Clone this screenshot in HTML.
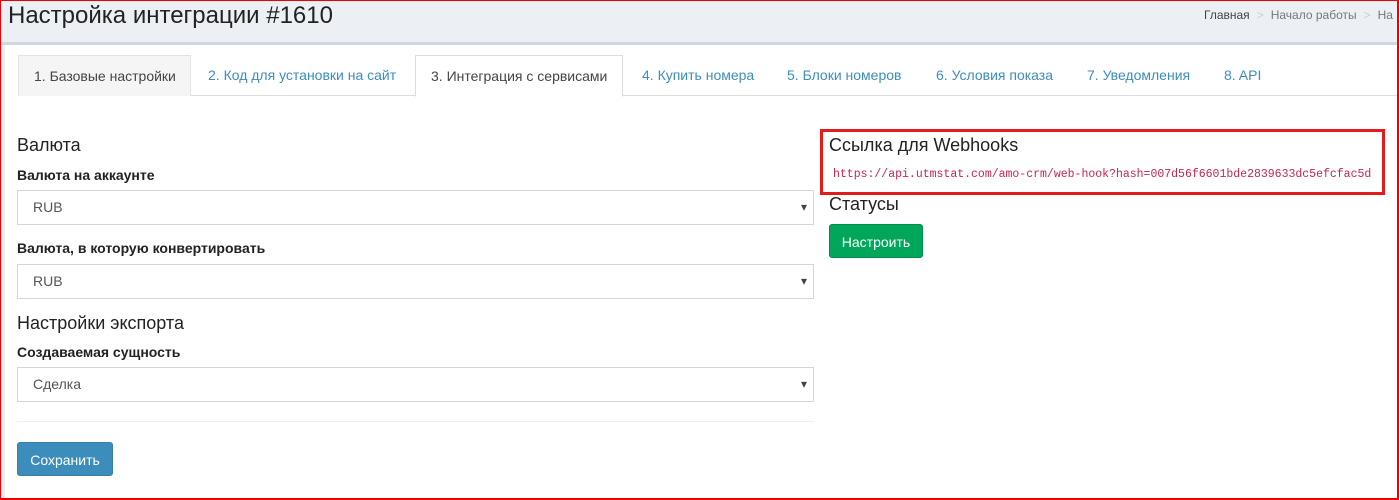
<!DOCTYPE html>
<html><head><meta charset="utf-8"><style>
*{box-sizing:border-box;margin:0;padding:0}
body{width:1399px;height:500px;overflow:hidden;background:#ecf0f5;font-family:"Liberation Sans",sans-serif;font-size:14px;color:#333;position:relative}
.frame{position:absolute;left:0;top:0;width:1399px;height:500px;border:1px solid #e00;border-right:2px solid #e00;border-bottom:2px solid #e00;pointer-events:none;z-index:10}
h1{position:absolute;left:8px;top:2px;font-size:24px;font-weight:normal;color:#222}
.bc{position:absolute;left:1204px;top:8px;font-size:12px;color:#777;white-space:nowrap}
.bc b{font-weight:normal;color:#444}.bc i{font-style:normal;color:#ccc;margin:0 7px}
.band{position:absolute;left:0;top:42px;width:1399px;height:3px;background:#d2d6de}
.box{position:absolute;left:5px;top:45px;width:1394px;height:455px;background:#fff}
.tabs{position:absolute;left:18px;top:55px;right:0;height:41px;border-bottom:1px solid #ddd}
.tab{position:absolute;top:0;height:41px;line-height:40px;color:#3c8dbc;padding:0 15px;white-space:nowrap}
.t1{background:#f5f5f5;border:1px solid #e3e3e3;border-bottom:none;color:#444;left:0;width:173px}
.t3{background:#fff;border:1px solid #ddd;border-bottom:1px solid #fff;color:#444;left:397px;width:208px;height:42px}
.h{position:absolute;font-size:18px;color:#222}
.lbl{position:absolute;font-weight:bold;font-size:14px;color:#222}
.sel{position:absolute;left:17px;width:797px;height:35px;border:1px solid #d2d6de;padding:0 0 0 15px;line-height:33px;color:#555}
.sel:after{content:"▾";position:absolute;right:6px;top:0;font-size:12px;color:#444}
.hr{position:absolute;left:17px;top:421px;width:797px;height:1px;background:#eee}
.btn{position:absolute;color:#fff;border-radius:3px;text-align:center;line-height:34px;font-size:14px}
.wh{position:absolute;left:820px;top:129px;width:565px;height:66px;border:3px solid #e41b1b}
code{position:absolute;left:10px;top:36px;font-family:"Liberation Mono",monospace;font-size:11.5px;color:#c7254e}
</style></head><body>
<h1>Настройка интеграции #1610</h1>
<div class="bc"><b>Главная</b><i>&gt;</i>Начало работы<i>&gt;</i>На</div>
<div class="band"></div>
<div class="box"></div>
<div class="tabs">
<div class="tab t1">1. Базовые настройки</div>
<div class="tab" style="left:175px">2. Код для установки на сайт</div>
<div class="tab t3">3. Интеграция с сервисами</div>
<div class="tab" style="left:609px">4. Купить номера</div>
<div class="tab" style="left:754px">5. Блоки номеров</div>
<div class="tab" style="left:903px">6. Условия показа</div>
<div class="tab" style="left:1054px">7. Уведомления</div>
<div class="tab" style="left:1191px">8. API</div>
</div>
<div class="h" style="left:17px;top:135px">Валюта</div>
<div class="lbl" style="left:17px;top:167px">Валюта на аккаунте</div>
<div class="sel" style="top:190px">RUB</div>
<div class="lbl" style="left:17px;top:240px">Валюта, в которую конвертировать</div>
<div class="sel" style="top:264px">RUB</div>
<div class="h" style="left:17px;top:313px">Настройки экспорта</div>
<div class="lbl" style="left:17px;top:344px">Создаваемая сущность</div>
<div class="sel" style="top:367px">Сделка</div>
<div class="hr"></div>
<div class="btn" style="left:17px;top:442px;width:96px;height:34px;background:#3c8dbc;border:1px solid #367fa9">Сохранить</div>
<div class="wh"><div class="h" style="left:6px;top:3px">Ссылка для Webhooks</div><code>https://api.utmstat.com/amo-crm/web-hook?hash=007d56f6601bde2839633dc5efcfac5d</code></div>
<div class="h" style="left:829px;top:194px">Статусы</div>
<div class="btn" style="left:829px;top:224px;width:94px;height:34px;background:#00a65a;border:1px solid #008d4c">Настроить</div>
<div class="frame"></div>
</body></html>
